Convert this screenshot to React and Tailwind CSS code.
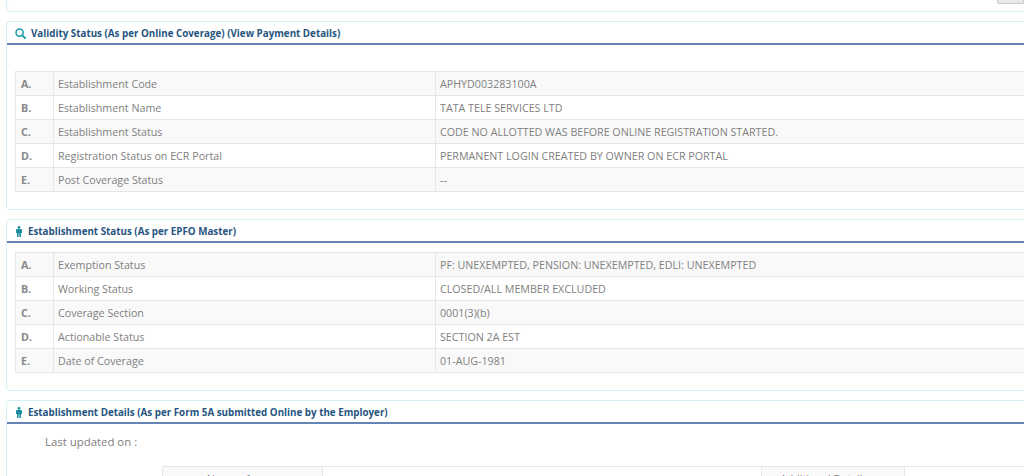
import React from "react";

const SearchIcon = () => (
  <svg width="11" height="11" viewBox="0 0 11 11" fill="none" className="shrink-0 text-[#1b9aa8]">
    <circle cx="4.6" cy="4.6" r="3.6" stroke="currentColor" strokeWidth="1.5" />
    <path d="M7.3 7.3 10 10" stroke="currentColor" strokeWidth="1.8" strokeLinecap="round" />
  </svg>
);

const PersonIcon = () => (
  <svg width="6" height="11" viewBox="0 0 6 11" className="shrink-0 text-[#1b8f9c]" fill="currentColor">
    <circle cx="3" cy="1.4" r="1.4" />
    <path d="M1.2 3h3.6c.6 0 1.2.5 1.2 1.1V7H5v4H3.4V7.6h-.8V11H1V7H0V4.1C0 3.5.6 3 1.2 3z" />
  </svg>
);

const Header = ({ icon, pad, gap, children }) => (
  <div className={`flex items-center h-[23px] pt-[2px] border-b-2 border-[#6485b3] ${pad} ${gap}`}>
    {icon}
    <span className="text-[9.8px] font-bold text-[#27557f] leading-none whitespace-nowrap">{children}</span>
  </div>
);

const Rows = ({ rows }) => (
  <table className="w-[1100px] table-fixed border-collapse text-[10.7px] text-[#808080]">
    <colgroup>
      <col className="w-[38px]" />
      <col className="w-[382px]" />
      <col />
    </colgroup>
    <tbody>
      {rows.map(([k, l, v], i) => (
        <tr key={k} className={`h-[24px] ${i % 2 === 0 ? "bg-[#f9f9f9]" : "bg-white"}`}>
          <td className="border border-[#e6e6e6] pl-[5px] pt-[2px] font-bold text-[#888888]">{k}</td>
          <td className="border border-[#e6e6e6] pl-[4px] pt-[2px]">{l}</td>
          <td className="border border-[#e6e6e6] pl-[4px] pt-[2px]">{v}</td>
        </tr>
      ))}
    </tbody>
  </table>
);

const panel = "border border-[#d5eff7] rounded-[4px] bg-white w-[1100px] ml-[6px]";

export default function App() {
  return (
    <div className="relative w-[1024px] h-[476px] overflow-hidden bg-white" style={{ fontFamily: '"Open Sans", sans-serif' }}>
      <div className="absolute right-0 top-0 w-[27px] h-[4px] bg-[#e9e9e9] border border-t-0 border-[#c8c8c8] rounded-b-[2px]" />
      <div className={`${panel} h-[13px] -mt-[1px] mb-[9px]`} />

      <div className={`${panel} h-[189px] mb-[9px]`}>
        <Header icon={<SearchIcon />} pad="pl-[8px]" gap="gap-[5px]">Validity Status (As per Online Coverage) (View Payment Details)</Header>
        <div className="pl-[8px] pt-[26px]">
          <Rows rows={[
            ["A.", "Establishment Code", "APHYD003283100A"],
            ["B.", "Establishment Name", "TATA TELE SERVICES LTD"],
            ["C.", "Establishment Status", "CODE NO ALLOTTED WAS BEFORE ONLINE REGISTRATION STARTED."],
            ["D.", "Registration Status on ECR Portal", "PERMANENT LOGIN CREATED BY OWNER ON ECR PORTAL"],
            ["E.", "Post Coverage Status", "--"],
          ]} />
        </div>
      </div>

      <div className={`${panel} h-[172px] mb-[9px]`}>
        <Header icon={<PersonIcon />} pad="pl-[9px]" gap="gap-[6px]">Establishment Status (As per EPFO Master)</Header>
        <div className="pl-[8px] pt-[9px]">
          <Rows rows={[
            ["A.", "Exemption Status", "PF: UNEXEMPTED, PENSION: UNEXEMPTED, EDLI: UNEXEMPTED"],
            ["B.", "Working Status", "CLOSED/ALL MEMBER EXCLUDED"],
            ["C.", "Coverage Section", "0001(3)(b)"],
            ["D.", "Actionable Status", "SECTION 2A EST"],
            ["E.", "Date of Coverage", "01-AUG-1981"],
          ]} />
        </div>
      </div>

      <div className={`${panel} h-[200px]`}>
        <Header icon={<PersonIcon />} pad="pl-[9px]" gap="gap-[6px]">Establishment Details (As per Form 5A submitted Online by the Employer)</Header>
        <p className="pl-[38px] pt-[9px] text-[11.4px] leading-[17px] text-[#808080]">Last updated on :</p>
        <div className="flex ml-[155px] mt-[16px] h-[40px] w-[900px] text-[10.7px] text-[#808080] border-t border-[#e6e6e6]">
          <div className="w-[161px] bg-[#f9f9f9] border-l border-r border-[#e6e6e6] pt-[4px] pl-[44px]">Name of Establishment</div>
          <div className="w-[439px] bg-white border-r border-[#e6e6e6]" />
          <div className="w-[143px] bg-[#f9f9f9] border-r border-[#e6e6e6] pt-[4px] pl-[18px] whitespace-nowrap">Additional Details</div>
          <div className="flex-1 bg-white" />
        </div>
      </div>
    </div>
  );
}
